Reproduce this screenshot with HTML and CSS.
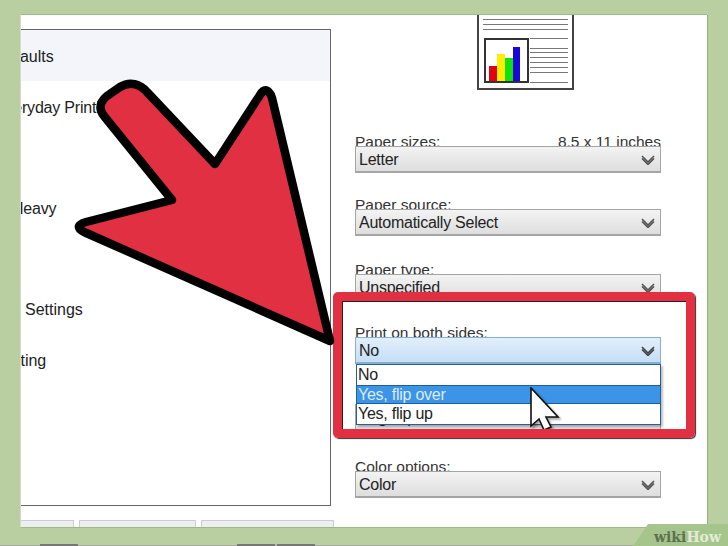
FILE: index.html
```html
<!DOCTYPE html>
<html lang="en">
<head>
  <meta charset="UTF-8" />
  <title>Print on both sides</title>
  <link rel="stylesheet" href="styles.css">
</head>
<body>
  <div class="page">
    <div class="window">
      <div class="left">
        <ul class="presets">
          <li class="preset preset-defaults">Defaults</li>
          <li class="preset preset-everyday">Everyday Printing</li>
          <li class="preset"></li>
          <li class="preset preset-heavy">Heavy</li>
          <li class="preset"></li>
          <li class="preset preset-settings">Settings</li>
          <li class="preset preset-printing">Printing</li>
        </ul>
        <div class="tabs">
          <span class="tab tab-a"></span>
          <span class="tab tab-b"></span>
          <span class="tab tab-c"></span>
        </div>
      </div>

      <div class="right">
        <svg class="preview" width="97" height="76" viewBox="0 0 97 76">
          <rect x="1" y="-4" width="95" height="78" fill="#fff" stroke="#444" stroke-width="2" />
          <g stroke="#777" stroke-width="1">
            <path d="M6 4.5H91M6 9.5H91M6 14.5H91M53 23.5H91M53 33.5H91M53 37.5H91M53 42.5H91M53 47.5H91M53 52.5H91M53 57.5H91M53 67.5H91" />
          </g>
          <rect x="8" y="24" width="43" height="43" fill="#fff" stroke="#333" stroke-width="2" />
          <rect x="12" y="51" width="8" height="15" fill="#e0000f" />
          <rect x="20" y="39" width="8" height="27" fill="#ffee00" />
          <rect x="28" y="43" width="8" height="23" fill="#10e010" />
          <rect x="36" y="32" width="7" height="34" fill="#1808d8" />
        </svg>

        <div class="group group-size">
          <div class="field-label"><span>Paper sizes:</span><span>8.5 x 11 inches</span></div>
          <div class="select"><span>Letter</span><svg class="chevron" width="14" height="10" viewBox="0 0 14 10"><path d="M1 1l6 6 6-6M1 3.5l6 6 6-6" fill="none" stroke="#555" stroke-width="1.6" /></svg></div>
        </div>

        <div class="group group-source">
          <div class="field-label"><span>Paper source:</span></div>
          <div class="select"><span>Automatically Select</span><svg class="chevron" width="14" height="10" viewBox="0 0 14 10"><path d="M1 1l6 6 6-6M1 3.5l6 6 6-6" fill="none" stroke="#555" stroke-width="1.6" /></svg></div>
        </div>

        <div class="group group-type">
          <div class="field-label"><span>Paper type:</span></div>
          <div class="select"><span>Unspecified</span><svg class="chevron" width="14" height="10" viewBox="0 0 14 10"><path d="M1 1l6 6 6-6M1 3.5l6 6 6-6" fill="none" stroke="#555" stroke-width="1.6" /></svg></div>
        </div>

        <div class="group group-sides">
          <div class="field-label"><span>Print on both sides:</span></div>
          <div class="select select-open"><span>No</span><svg class="chevron" width="14" height="10" viewBox="0 0 14 10"><path d="M1 1l6 6 6-6M1 3.5l6 6 6-6" fill="none" stroke="#444" stroke-width="1.6" /></svg>
            <ul class="dropdown">
              <li class="option">No</li>
              <li class="option option-hover">Yes, flip over</li>
              <li class="option">Yes, flip up</li>
            </ul>
          </div>
        </div>

        <div class="group group-quality">
          <div class="select"><span>Pages per sheet</span></div>
        </div>

        <div class="group group-color">
          <div class="field-label"><span>Color options:</span></div>
          <div class="select"><span>Color</span><svg class="chevron" width="14" height="10" viewBox="0 0 14 10"><path d="M1 1l6 6 6-6M1 3.5l6 6 6-6" fill="none" stroke="#555" stroke-width="1.6" /></svg></div>
        </div>
      </div>
    </div>

    <div class="foot">
      <span class="foot-box foot-a"></span>
      <span class="foot-box foot-b"></span>
      <span class="foot-box foot-c"></span>
    </div>

    <!-- cursor sits under the red box, it gets cut at the box edge -->
    <svg class="cursor" width="34" height="44" viewBox="0 0 34 44">
      <path d="M2 1V39L10 32 15 43 22 40 17 30H29Z" fill="#fff" stroke="#111" stroke-width="1.6" stroke-linejoin="miter" />
    </svg>
    <div class="redbox"></div>
    <svg class="arrow" width="345" height="360" viewBox="0 0 345 360">
      <path d="M104 116C98 108 100 102 107 96L120 87C130 81 140 84 147 92L215 164 260 95C264 88 269 89 272 98L330 341 84 232C76 228 78 224 86 222L172 200 104 116Z" fill="#e03042" stroke="#000" stroke-width="8.5" stroke-linejoin="round" />
    </svg>

    <div class="badge"><span class="badge-wiki">wiki</span><span class="badge-how">How</span></div>
  </div>
</body>
</html>
```

FILE: styles.css
```css
:root {
  --green: #b9cfa1;
  --red: #e03042;
  --text: #222;
  --font-family: 'Liberation Sans', Arial, sans-serif;
}

* {
  box-sizing: border-box;
}

body {
  margin: 0;
  font-family: var(--font-family);
  font-size: 16px;
  color: var(--text);
}

.page {
  position: relative;
  width: 728px;
  height: 546px;
  padding-top: 15px;
  overflow: hidden;
  background: var(--green);
}

.window {
  display: flex;
  height: 512px;
  margin: 0 21px;
  overflow: hidden;
  background: #fff;
  box-shadow: 0 -1px 0 #9dba85, 1px 0 0 #93b17c, 0 1px 0 #9dba85, -1px 0 0 #cfdfc0;
}

.left {
  flex: none;
  width: 364px;
  margin-left: -30px;
  padding-top: 14px;
}

.presets {
  width: 340px;
  height: 477px;
  margin: 0 0 14px;
  padding: 0;
  list-style: none;
  border: 1px solid #666;
  border-left: 0;
}

.preset {
  height: 50.5px;
  line-height: 53px;
  white-space: nowrap;
}

.preset-defaults {
  height: 51px;
  padding-left: 4px;
  line-height: 54px;
  background: #f3f5fb;
}

.preset-everyday {
  padding-left: 4px;
  letter-spacing: -0.2px;
}

.preset-heavy {
  padding-left: 21px;
  letter-spacing: -0.2px;
}

.preset-settings {
  padding-left: 34px;
}

.preset-printing {
  padding-left: 1px;
}

.tabs {
  display: flex;
  gap: 5px;
}

.tab {
  height: 7px;
  background: #eceef0;
  border: 1px solid #ccd;
  border-bottom: 0;
}

.tab-a {
  width: 83px;
}

.tab-b {
  width: 117px;
}

.tab-c {
  width: 133px;
}

.right {
  flex: none;
  width: 306px;
}

.preview {
  display: block;
  margin-left: 122px;
}

.group {
  margin-top: 25px;
}

.group-size {
  margin-top: 44px;
}

.group-type {
  margin-top: 27px;
}

.group-quality {
  margin-top: 40px;
}

.group-color {
  margin-top: 29px;
}

.field-label {
  display: flex;
  justify-content: space-between;
  height: 11px;
  line-height: 13px;
  overflow: hidden;
  font-size: 15.5px;
  color: #333;
}

.select {
  display: flex;
  align-items: center;
  justify-content: space-between;
  height: 27px;
  padding: 1px 5px 0 3px;
  background: linear-gradient(#f3f3f3, #dedede);
  border: 1px solid #a5a5a5;
  border-bottom-width: 2px;
  letter-spacing: -0.25px;
  white-space: nowrap;
}

.select-open {
  position: relative;
  background: linear-gradient(#e2effb, #c5def6);
  border-color: #84aed2;
}

.dropdown {
  position: absolute;
  top: 26px;
  left: 0;
  right: -1px;
  margin: 0;
  padding: 0;
  list-style: none;
  background: #fff;
  border: 1px solid #24609c;
  box-shadow: 2px 2px 2px rgba(0, 0, 0, 0.25);
}

.option {
  height: 19.5px;
  padding-left: 1px;
  line-height: 19px;
}

.option-hover {
  background: #3c94e6;
  color: #dcebfa;
  box-shadow: inset 0 1px 0 #1f5c9c, inset 0 -1px 0 #1f5c9c;
}

.foot {
  display: flex;
  height: 19px;
  padding-top: 17px;
  border-bottom: 1px solid #a8a8a8;
}

.foot-box {
  width: 38px;
  height: 2px;
  background: #777;
}

.foot-a {
  margin-left: 40px;
}

.foot-b {
  margin-left: 159px;
}

.foot-c {
  margin-left: 2px;
}

.cursor {
  position: absolute;
  left: 529px;
  top: 387px;
  filter: drop-shadow(2px 2px 1px rgba(0, 0, 0, 0.35));
}

.redbox {
  position: absolute;
  left: 333px;
  top: 292px;
  width: 362px;
  height: 146px;
  border: 9px solid var(--red);
  border-radius: 5px;
  box-shadow: 1px 1px 1px #333, inset 1px 1px 0 #222;
}

.arrow {
  position: absolute;
  left: 0;
  top: 0;
}

.badge {
  position: absolute;
  right: 0;
  bottom: 0;
  width: 95px;
  height: 22px;
  padding: 3px 0 0 21px;
  background: #a6c58c;
  clip-path: polygon(15px 0, 100% 0, 100% 100%, 0 100%);
  font-family: 'DejaVu Serif', serif;
  font-size: 14px;
  font-weight: 700;
  line-height: 20px;
  white-space: nowrap;
}

.badge-wiki {
  color: #5c7052;
}

.badge-how {
  color: #e4ecd8;
}
```
